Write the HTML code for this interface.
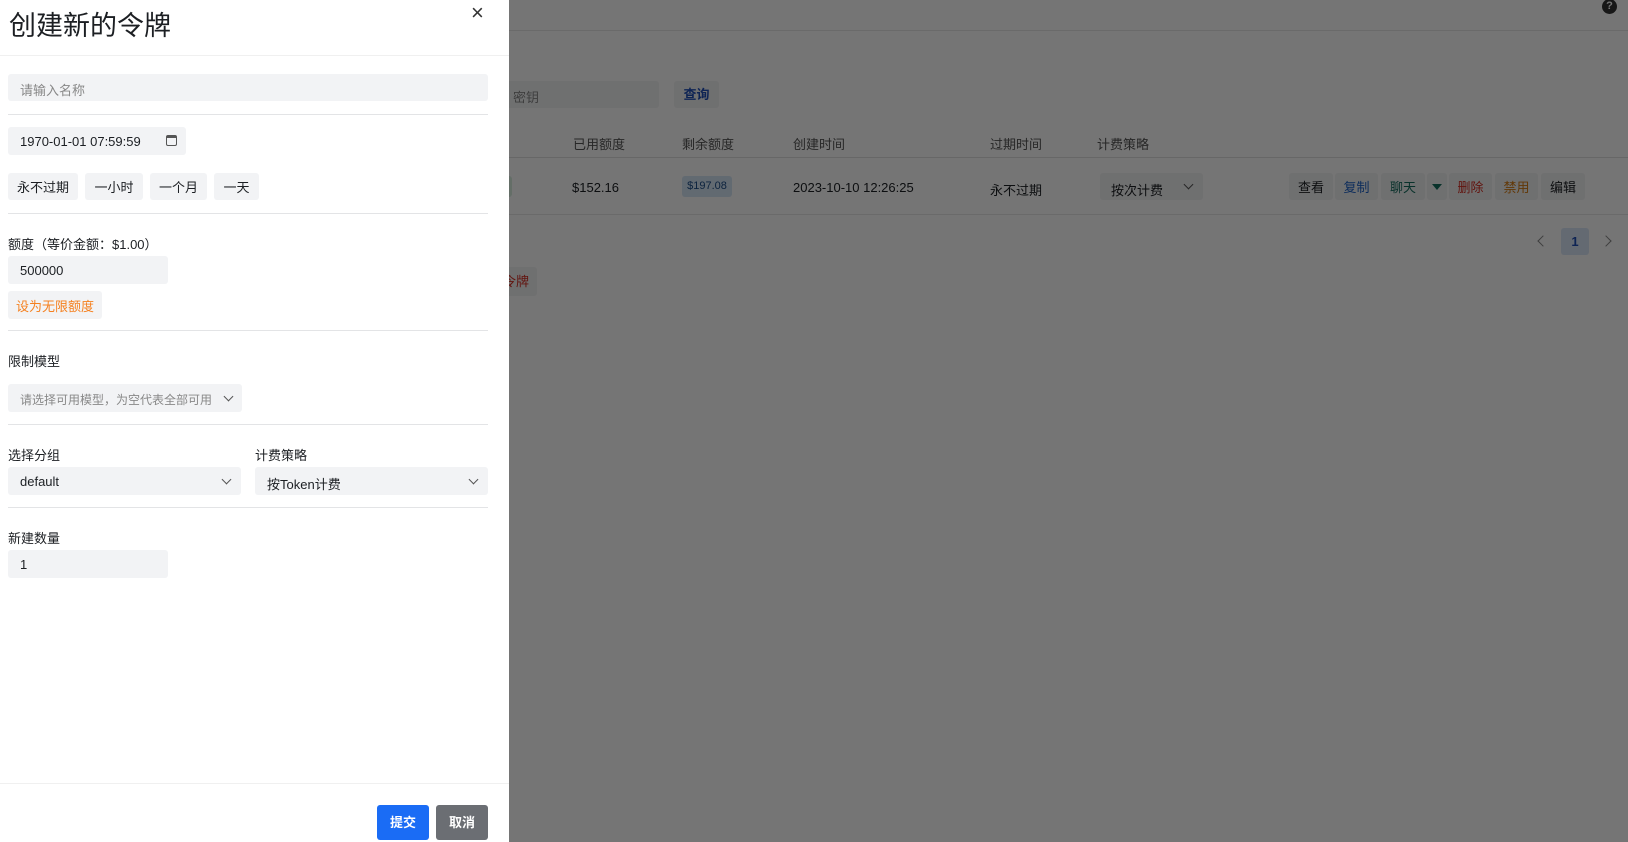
<!DOCTYPE html>
<html><head><meta charset="utf-8"><style>
*{box-sizing:border-box;margin:0;padding:0}
body{width:1628px;height:842px;overflow:hidden;position:relative;background:#fff;font-family:"Liberation Sans","Noto Sans CJK SC",sans-serif;font-size:13px;color:#1c1f23}
.a{position:absolute}
.ov{position:absolute;left:0;top:0;width:1628px;height:842px;background:rgba(0,0,0,.54)}
.gb{background:#f2f3f5;border-radius:3px}
.t{white-space:nowrap}
.dr{position:absolute;left:0;top:0;width:509px;height:842px;background:#fff}
.hr{position:absolute;left:8px;width:480px;height:1px;background:#e3e4e6}
.lbl{font-size:13px;color:#1c1f23}
.btn{position:absolute;background:#f2f3f5;border-radius:3px;font-size:13px;display:flex;align-items:center;justify-content:center;height:27px}
.chev{position:absolute;width:7px;height:7px;border-right:1.5px solid #555;border-bottom:1.5px solid #555;transform:rotate(45deg)}
</style></head><body>
<div class="a" style="left:0;top:30px;width:1628px;height:1px;background:#e8e8e8"></div>
<div class="a" style="left:1602px;top:-1px;width:15px;height:15px;border-radius:50%;background:#333;color:#fff;font-size:11px;font-weight:bold;text-align:center;line-height:15px">?</div>
<div class="a gb" style="left:480px;top:81px;width:179px;height:27px"></div>
<div class="a t" style="left:513px;top:87px;color:#888">密钥</div>
<div class="a gb t" style="left:674px;top:81px;width:45px;height:27px;color:#1f4fb8;font-weight:bold;text-align:center;line-height:27px">查询</div>
<div class="a t" style="left:573px;top:134px;color:#555">已用额度</div>
<div class="a t" style="left:682px;top:134px;color:#555">剩余额度</div>
<div class="a t" style="left:793px;top:134px;color:#555">创建时间</div>
<div class="a t" style="left:990px;top:134px;color:#555">过期时间</div>
<div class="a t" style="left:1097px;top:134px;color:#555">计费策略</div>
<div class="a" style="left:480px;top:157px;width:1148px;height:1px;background:#e0e0e0"></div>
<div class="a" style="left:480px;top:214px;width:1148px;height:1px;background:#e8e8e8"></div>
<div class="a" style="left:490px;top:176px;width:22px;height:21px;background:#d9efe0;border-radius:3px"></div>
<div class="a t" style="left:572px;top:180px">$152.16</div>
<div class="a t" style="left:682px;top:176px;width:50px;height:21px;background:#d6e6f7;border-radius:3px;font-size:11px;color:#1c4d88;text-align:center;line-height:21px">$197.08</div>
<div class="a t" style="left:793px;top:180px">2023-10-10 12:26:25</div>
<div class="a t" style="left:990px;top:180px">永不过期</div>
<div class="a gb" style="left:1100px;top:173px;width:103px;height:27px"></div>
<div class="a t" style="left:1111px;top:180px">按次计费</div>
<div class="chev" style="left:1185px;top:181px"></div>
<div class="btn" style="left:1289px;width:44px;top:173px">查看</div>
<div class="btn" style="left:1335px;width:43px;top:173px;color:#1d62c7">复制</div>
<div class="btn" style="left:1381px;width:44px;top:173px;color:#156d5f">聊天</div>
<div class="btn" style="left:1427px;width:20px;top:173px"><span style="width:0;height:0;border-left:5px solid transparent;border-right:5px solid transparent;border-top:6px solid #156d5f"></span></div>
<div class="btn" style="left:1449px;width:43px;top:173px;color:#d52d21">删除</div>
<div class="btn" style="left:1495px;width:43px;top:173px;color:#d57a0e">禁用</div>
<div class="btn" style="left:1541px;width:44px;top:173px">编辑</div>
<div class="a" style="left:1539px;top:237px;width:8px;height:8px;border-left:1.5px solid #888;border-bottom:1.5px solid #888;transform:rotate(45deg)"></div>
<div class="a" style="left:1561px;top:228px;width:28px;height:27px;background:#dbe6f9;border-radius:3px;color:#1f4fb8;text-align:center;line-height:27px;font-weight:bold">1</div>
<div class="a" style="left:1602px;top:237px;width:8px;height:8px;border-right:1.5px solid #888;border-top:1.5px solid #888;transform:rotate(45deg)"></div>
<div class="a gb t" style="left:480px;top:267px;width:57px;height:29px;color:#d52d21;line-height:29px;text-align:right;padding-right:8px">令牌</div>
<div class="ov"></div>
<div class="dr">
<div class="a t" style="left:9px;top:4px;font-size:27px;color:#1c1f23">创建新的令牌</div>
<div class="a" style="left:471px;top:0px;font-size:22px;color:#333">×</div>
<div class="a" style="left:0;top:55px;width:509px;height:1px;background:#f0f0f0"></div>
<div class="a gb" style="left:8px;top:74px;width:480px;height:27px"></div>
<div class="a t" style="left:20px;top:80px;color:#888">请输入名称</div>
<div class="hr" style="top:114px"></div>
<div class="a gb" style="left:8px;top:127px;width:178px;height:28px"></div>
<div class="a t" style="left:20px;top:134px">1970-01-01 07:59:59</div>
<div class="a" style="left:166px;top:135px;width:11px;height:11px;border:1.3px solid #555;border-top-width:3px;border-radius:2px"></div>
<div class="btn" style="left:8px;width:70px;top:173px">永不过期</div>
<div class="btn" style="left:85px;width:58px;top:173px">一小时</div>
<div class="btn" style="left:150px;width:57px;top:173px">一个月</div>
<div class="btn" style="left:214px;width:45px;top:173px">一天</div>
<div class="hr" style="top:213px"></div>
<div class="a t lbl" style="left:8px;top:234px">额度（等价金额：$1.00）</div>
<div class="a gb" style="left:8px;top:256px;width:160px;height:28px"></div>
<div class="a t" style="left:20px;top:263px">500000</div>
<div class="btn" style="left:8px;width:94px;top:291px;height:28px;color:#f5801f">设为无限额度</div>
<div class="hr" style="top:330px"></div>
<div class="a t lbl" style="left:8px;top:351px">限制模型</div>
<div class="a gb" style="left:8px;top:384px;width:234px;height:28px"></div>
<div class="a t" style="left:20px;top:391px;color:#888;font-size:12px">请选择可用模型，为空代表全部可用</div>
<div class="chev" style="left:225px;top:393px"></div>
<div class="hr" style="top:424px"></div>
<div class="a t lbl" style="left:8px;top:445px">选择分组</div>
<div class="a t lbl" style="left:255px;top:445px">计费策略</div>
<div class="a gb" style="left:8px;top:467px;width:233px;height:28px"></div>
<div class="a t" style="left:20px;top:474px">default</div>
<div class="chev" style="left:223px;top:476px"></div>
<div class="a gb" style="left:255px;top:467px;width:233px;height:28px"></div>
<div class="a t" style="left:267px;top:474px">按Token计费</div>
<div class="chev" style="left:470px;top:476px"></div>
<div class="hr" style="top:507px"></div>
<div class="a t lbl" style="left:8px;top:528px">新建数量</div>
<div class="a gb" style="left:8px;top:550px;width:160px;height:28px"></div>
<div class="a t" style="left:20px;top:557px">1</div>
<div class="a" style="left:0;top:783px;width:509px;height:1px;background:#f0f0f0"></div>
<div class="a t" style="left:377px;top:805px;width:52px;height:35px;background:#1a6cf5;border-radius:3px;color:#fff;font-weight:bold;text-align:center;line-height:35px">提交</div>
<div class="a t" style="left:436px;top:805px;width:52px;height:35px;background:#6b6e73;border-radius:3px;color:#fff;font-weight:bold;text-align:center;line-height:35px">取消</div>
</div>
</body></html>
